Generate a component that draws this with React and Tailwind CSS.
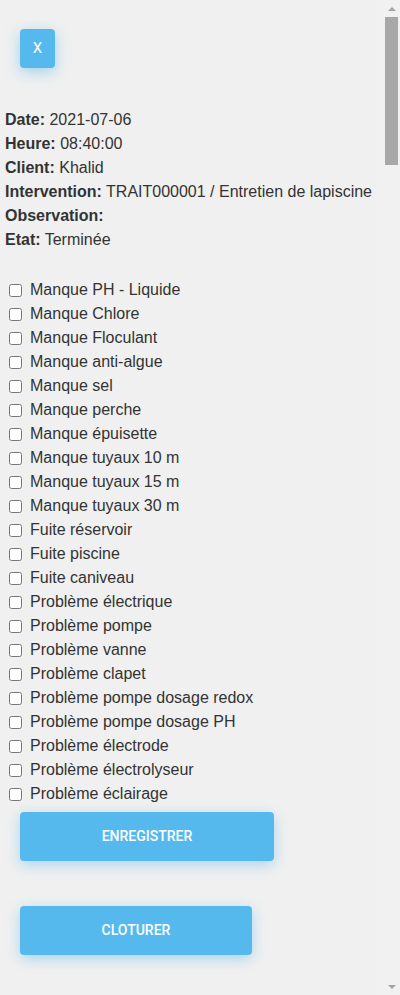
import React, { useState } from "react";

const problemes = [
  "Manque PH - Liquide",
  "Manque Chlore",
  "Manque Floculant",
  "Manque anti-algue",
  "Manque sel",
  "Manque perche",
  "Manque épuisette",
  "Manque tuyaux 10 m",
  "Manque tuyaux 15 m",
  "Manque tuyaux 30 m",
  "Fuite réservoir",
  "Fuite piscine",
  "Fuite caniveau",
  "Problème électrique",
  "Problème pompe",
  "Problème vanne",
  "Problème clapet",
  "Problème pompe dosage redox",
  "Problème pompe dosage PH",
  "Problème électrode",
  "Problème électrolyseur",
  "Problème éclairage",
];

const infos = [
  ["Date:", "2021-07-06"],
  ["Heure:", "08:40:00"],
  ["Client:", "Khalid"],
  ["Intervention:", "TRAIT000001 / Entretien de lapiscine"],
  ["Observation:", ""],
  ["Etat:", "Terminée"],
];

const btn =
  "rounded-[4px] bg-[#56b9ee] text-white font-medium uppercase text-[14px] shadow-[0_4px_14px_rgba(86,185,238,0.45)] font-['Roboto',sans-serif]";

const Scrollbar = () => (
  <div className="w-[17px] h-[995px] bg-[#f1f1f1] flex flex-col items-center shrink-0">
    <div className="h-[17px] flex items-center justify-center">
      <div className="w-0 h-0 border-l-[4px] border-r-[4px] border-b-[4px] border-l-transparent border-r-transparent border-b-[#a3a3a3]" />
    </div>
    <div className="w-[13px] h-[148px] bg-[#a8a8a8]" />
    <div className="flex-1" />
    <div className="h-[17px] flex items-center justify-center">
      <div className="w-0 h-0 border-l-[4px] border-r-[4px] border-t-[4px] border-l-transparent border-r-transparent border-t-[#a3a3a3]" />
    </div>
  </div>
);

export default function App() {
  const [checked, setChecked] = useState({});

  return (
    <div className="flex w-[400px] h-[995px] overflow-hidden bg-[#f0f0f0] font-['Liberation_Sans',Arial,sans-serif] text-[#333] text-[16px]">
      <div className="flex-1 flex flex-col">
        <div className="pt-[29px] pl-[20px]">
          <button className="w-[35px] h-[39px] rounded-[4px] bg-[#56b9ee] text-white text-[15px] font-normal font-['Roboto',sans-serif] shadow-[0_4px_14px_rgba(86,185,238,0.5)]">
            X
          </button>
        </div>

        <div className="mt-[40px] pl-[5px] leading-[24px]">
          {infos.map(([label, value]) => (
            <div key={label}>
              <span className="font-bold">{label}</span> {value}
            </div>
          ))}
        </div>

        <div className="mt-[26px] leading-[24px]">
          {problemes.map((p, i) => (
            <label key={p} className="flex items-center h-[24px]">
              <input
                type="checkbox"
                checked={!!checked[i]}
                onChange={() => setChecked({ ...checked, [i]: !checked[i] })}
                className="ml-[9px] mr-[8px] w-[13px] h-[13px]"
              />
              <span>{p}</span>
            </label>
          ))}
        </div>

        <div className="pl-[20px] mt-[6px]">
          <button className={`${btn} w-[254px] h-[49px]`}>Enregistrer</button>
        </div>
        <div className="pl-[20px] mt-[45px]">
          <button className={`${btn} w-[232px] h-[49px]`}>Cloturer</button>
        </div>
      </div>
      <Scrollbar />
    </div>
  );
}
